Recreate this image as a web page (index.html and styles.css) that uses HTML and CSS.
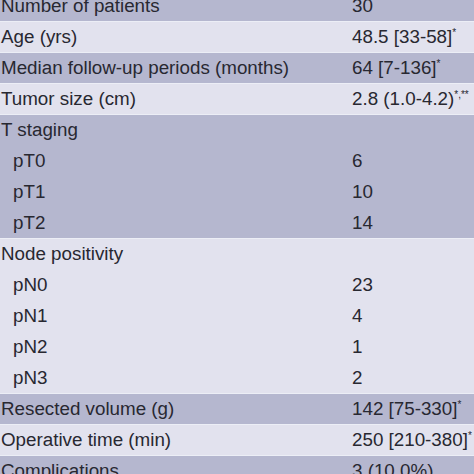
FILE: index.html
```html
<!DOCTYPE html>
<html>
<head>
<meta charset="utf-8">
<link rel="stylesheet" href="styles.css">
</head>
<body>
<div class="table">
  <div class="group dark"><div class="row"><span class="label">Number of patients</span><span class="value">30</span></div></div>
  <div class="group light"><div class="row"><span class="label">Age (yrs)</span><span class="value">48.5 [33-58]<sup>*</sup></span></div></div>
  <div class="group dark"><div class="row"><span class="label">Median follow-up periods (months)</span><span class="value">64 [7-136]<sup>*</sup></span></div></div>
  <div class="group light"><div class="row"><span class="label">Tumor size (cm)</span><span class="value">2.8 (1.0-4.2)<sup>*,**</sup></span></div></div>
  <div class="group dark">
    <div class="row"><span class="label">T staging</span><span class="value"></span></div>
    <div class="row"><span class="label sub">pT0</span><span class="value">6</span></div>
    <div class="row"><span class="label sub">pT1</span><span class="value">10</span></div>
    <div class="row"><span class="label sub">pT2</span><span class="value">14</span></div>
  </div>
  <div class="group light">
    <div class="row"><span class="label">Node positivity</span><span class="value"></span></div>
    <div class="row"><span class="label sub">pN0</span><span class="value">23</span></div>
    <div class="row"><span class="label sub">pN1</span><span class="value">4</span></div>
    <div class="row"><span class="label sub">pN2</span><span class="value">1</span></div>
    <div class="row"><span class="label sub">pN3</span><span class="value">2</span></div>
  </div>
  <div class="group dark"><div class="row"><span class="label">Resected volume (g)</span><span class="value">142 [75-330]<sup>*</sup></span></div></div>
  <div class="group light"><div class="row"><span class="label">Operative time (min)</span><span class="value">250 [210-380]<sup>*</sup></span></div></div>
  <div class="group dark"><div class="row"><span class="label">Complications</span><span class="value">3 (10.0%)</span></div></div>
</div>
</body>
</html>
```
FILE: styles.css
```css
html, body {
  margin: 0;
  padding: 0;
  width: 474px;
  height: 474px;
  overflow: hidden;
  background: #e2e2ee;
}
.table {
  margin-top: -10px;
  font-family: "Liberation Sans", Arial, sans-serif;
  font-size: 18.8px;
  color: #282831;
}
.group {
  border-top: 1px solid #eceef6;
}
.dark { background: #b5b7cf; }
.light { background: #e2e2ee; }
.row {
  display: grid;
  grid-template-columns: 352px 1fr;
  height: 31px;
  align-items: center;
  white-space: nowrap;
}
.group > .row:first-child { height: 30px; }
.label { padding-left: 1px; }
.label.sub { padding-left: 13px; }
.value sup {
  font-size: 10px;
  vertical-align: 7px;
  line-height: 0;
}
```
